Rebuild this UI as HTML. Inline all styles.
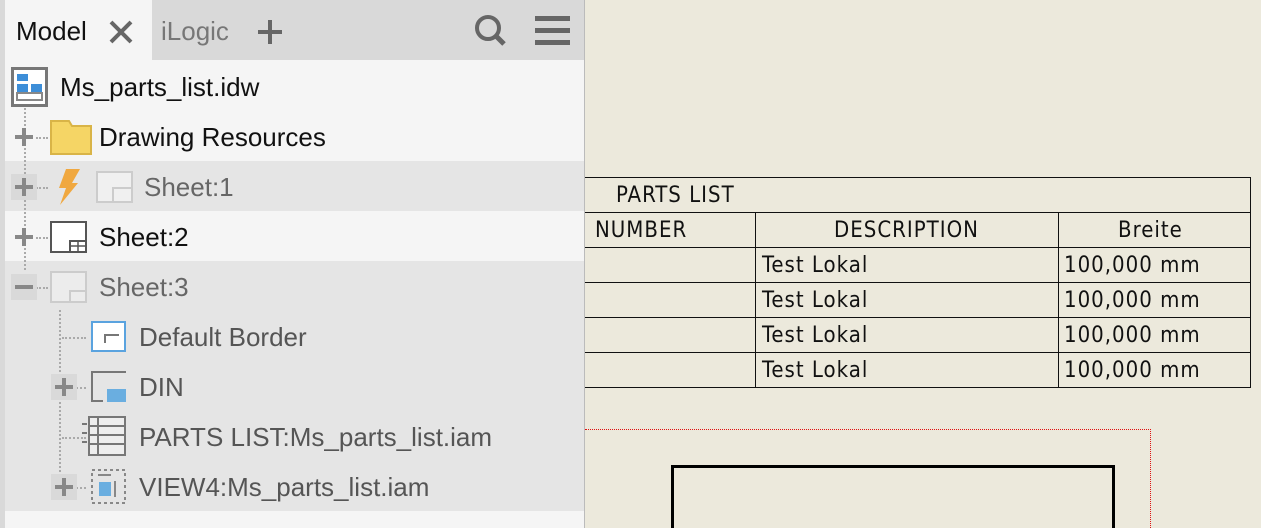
<!DOCTYPE html>
<html style="overflow:hidden;width:1261px;height:528px"><head><meta charset="utf-8"><style>
*{margin:0;padding:0;box-sizing:border-box}
body{width:1261px;height:528px;overflow:hidden;position:relative;background:#ece9dc;font-family:Tahoma,"Liberation Sans",sans-serif}
.a{position:absolute}
.t{position:absolute;font-size:26px;color:#111;white-space:nowrap;line-height:30px}
.g{color:#666}
.dv{position:absolute;border-left:2px dotted #aaa}
.dh{position:absolute;border-top:2px dotted #aaa}
.pl{position:absolute;width:26px;height:26px}
.pl:before{content:"";position:absolute;left:4px;top:11px;width:18px;height:4px;background:#888}
.pl.p:after{content:"";position:absolute;left:11px;top:4px;width:4px;height:18px;background:#888}
.pl.bg{background:#d9d9d9}
.tb{position:absolute;font-family:"DejaVu Sans Condensed","Liberation Sans",sans-serif;font-size:22px;color:#111;white-space:nowrap;line-height:35px;letter-spacing:1px}
</style></head><body>
<div class="a" style="left:0;top:0;width:584px;height:528px;background:#f5f5f5"></div>
<div class="a" style="left:0;top:0;width:584px;height:60px;background:#d9d9d9"></div>
<div class="a" style="left:5px;top:0;width:147px;height:60px;background:#f5f5f5"></div>
<div class="a" style="left:0;top:0;width:5px;height:528px;background:#d9d9d9"></div>
<div class="a" style="left:584px;top:0;width:1px;height:528px;background:#bbb"></div>
<div class="t" style="left:16px;top:16px;font-size:26px">Model</div>
<svg class="a" style="left:108px;top:19px" width="26" height="26"><path d="M3 3L23 23M23 3L3 23" stroke="#666" stroke-width="4"/></svg>
<div class="t g" style="left:161px;top:16px;font-size:26px;color:#777">iLogic</div>
<svg class="a" style="left:256px;top:18px" width="28" height="28"><path d="M14 2V26M2 14H26" stroke="#666" stroke-width="4"/></svg>
<svg class="a" style="left:472px;top:12px" width="40" height="40"><circle cx="16" cy="16" r="11" fill="none" stroke="#666" stroke-width="4"/><path d="M24 24L32 32" stroke="#666" stroke-width="5"/></svg>
<div class="a" style="left:535px;top:16px;width:35px;height:5px;background:#666"></div>
<div class="a" style="left:535px;top:28px;width:35px;height:5px;background:#666"></div>
<div class="a" style="left:535px;top:40px;width:35px;height:5px;background:#666"></div>
<div class="a" style="left:5px;top:161px;width:579px;height:50px;background:#e5e5e5"></div>
<div class="a" style="left:5px;top:261px;width:579px;height:250px;background:#e5e5e5"></div>
<div class="dv" style="left:24px;top:108px;height:162px"></div>
<div class="dv" style="left:59px;top:310px;height:170px"></div>
<div class="dh" style="left:36px;top:137px;width:12px"></div>
<div class="dh" style="left:36px;top:187px;width:12px"></div>
<div class="dh" style="left:36px;top:237px;width:12px"></div>
<div class="dh" style="left:36px;top:287px;width:12px"></div>
<div class="dh" style="left:62px;top:337px;width:24px"></div>
<div class="dh" style="left:76px;top:387px;width:10px"></div>
<div class="dh" style="left:62px;top:437px;width:24px"></div>
<div class="dh" style="left:76px;top:487px;width:10px"></div>
<svg class="a" style="left:11px;top:67px" width="38" height="40"><rect x="1.5" y="1.5" width="34" height="37" fill="#fff" stroke="#777" stroke-width="3"/><rect x="6" y="7" width="11" height="7" fill="#3d8ed8"/><rect x="6" y="17" width="11" height="8" fill="#3d8ed8"/><rect x="20" y="17" width="11" height="8" fill="#3d8ed8"/><rect x="6" y="26" width="25" height="7" fill="none" stroke="#888" stroke-width="2"/></svg>
<div class="t" style="left:60px;top:72px">Ms_parts_list.idw</div>
<div class="pl p" style="left:11px;top:124px"></div>
<svg class="a" style="left:50px;top:119px" width="42" height="36"><path d="M1 2H19L22 7H41V35H1Z" fill="#f5d565" stroke="#d9b447" stroke-width="2"/></svg>
<div class="t" style="left:99px;top:122px">Drawing Resources</div>
<div class="pl p bg" style="left:11px;top:174px"></div>
<svg class="a" style="left:54px;top:168px" width="30" height="38"><path d="M12 1H26L18 15H24L6 37L12 20H5Z" fill="#f0a840"/></svg>
<svg class="a" style="left:96px;top:171px" width="38" height="32"><rect x="1" y="1" width="35" height="30" fill="#f0f0f0" stroke="#ccc" stroke-width="2"/><rect x="17" y="17" width="19" height="14" fill="none" stroke="#ccc" stroke-width="2"/></svg>
<div class="t g" style="left:144px;top:172px">Sheet:1</div>
<div class="pl p" style="left:11px;top:224px"></div>
<svg class="a" style="left:50px;top:221px" width="38" height="32"><rect x="1" y="1" width="35" height="30" fill="#fff" stroke="#555" stroke-width="2"/><rect x="20" y="20" width="16" height="11" fill="none" stroke="#555" stroke-width="2"/><path d="M28 20V31M20 25H36" stroke="#555" stroke-width="1.5"/></svg>
<div class="t" style="left:99px;top:222px">Sheet:2</div>
<div class="pl bg" style="left:11px;top:274px"></div>
<svg class="a" style="left:50px;top:271px" width="38" height="32"><rect x="1" y="1" width="35" height="30" fill="#ececec" stroke="#ccc" stroke-width="2"/><rect x="20" y="20" width="16" height="11" fill="none" stroke="#ccc" stroke-width="2"/></svg>
<div class="t g" style="left:99px;top:272px">Sheet:3</div>
<svg class="a" style="left:91px;top:321px" width="36" height="32"><rect x="1" y="1" width="33" height="29" fill="#fff" stroke="#5aa3df" stroke-width="2"/><path d="M14 22V14H28" fill="none" stroke="#777" stroke-width="2"/></svg>
<div class="t g" style="left:139px;top:322px;color:#555">Default Border</div>
<div class="pl p bg" style="left:51px;top:374px"></div>
<svg class="a" style="left:91px;top:371px" width="36" height="32"><path d="M34 2V1H1V30H12" fill="none" stroke="#777" stroke-width="2"/><rect x="16" y="18" width="19" height="13" fill="#6aaee0"/></svg>
<div class="t g" style="left:139px;top:372px;color:#555">DIN</div>
<svg class="a" style="left:81px;top:416px" width="46" height="40"><rect x="8" y="1" width="36" height="38" fill="#eee" stroke="#777" stroke-width="2"/><path d="M8 10H44M8 19H44M8 28H44M17 1V39M1 8H6M1 17H6M1 26H6" stroke="#777" stroke-width="2"/></svg>
<div class="t g" style="left:139px;top:422px;color:#555">PARTS LIST:Ms_parts_list.iam</div>
<div class="pl p bg" style="left:51px;top:474px"></div>
<svg class="a" style="left:91px;top:469px" width="38" height="36"><rect x="1" y="1" width="33" height="33" fill="none" stroke="#888" stroke-width="2" stroke-dasharray="3 3"/><rect x="8" y="13" width="12" height="14" fill="#6aaee0"/><path d="M7 6H20M24 12V28" stroke="#888" stroke-width="2"/></svg>
<div class="t g" style="left:139px;top:472px;color:#555">VIEW4:Ms_parts_list.iam</div>
<div class="a" style="left:585px;top:177px;width:666px;height:211px;border:1px solid #111;border-left:none"></div>
<div class="a" style="left:585px;top:212px;width:666px;height:1px;background:#111"></div>
<div class="a" style="left:585px;top:247px;width:666px;height:1px;background:#111"></div>
<div class="a" style="left:585px;top:282px;width:666px;height:1px;background:#111"></div>
<div class="a" style="left:585px;top:317px;width:666px;height:1px;background:#111"></div>
<div class="a" style="left:585px;top:352px;width:666px;height:1px;background:#111"></div>
<div class="a" style="left:755px;top:212px;width:1px;height:176px;background:#111"></div>
<div class="a" style="left:1058px;top:212px;width:1px;height:176px;background:#111"></div>
<div class="tb" style="left:616px;top:178px">PARTS LIST</div>
<div class="tb" style="left:595px;top:213px">NUMBER</div>
<div class="tb" style="left:834px;top:213px">DESCRIPTION</div>
<div class="tb" style="left:1118px;top:213px">Breite</div>
<div class="tb" style="left:762px;top:248px">Test Lokal</div><div class="tb" style="left:1064px;top:248px">100,000 mm</div>
<div class="tb" style="left:762px;top:283px">Test Lokal</div><div class="tb" style="left:1064px;top:283px">100,000 mm</div>
<div class="tb" style="left:762px;top:318px">Test Lokal</div><div class="tb" style="left:1064px;top:318px">100,000 mm</div>
<div class="tb" style="left:762px;top:353px">Test Lokal</div><div class="tb" style="left:1064px;top:353px">100,000 mm</div>
<div class="a" style="left:585px;top:429px;width:566px;height:0;border-top:1px dotted #e01010"></div>
<div class="a" style="left:1150px;top:429px;width:0;height:99px;border-left:1px dotted #e01010"></div>
<div class="a" style="left:671px;top:465px;width:444px;height:63px;border:3px solid #000;border-bottom:none"></div>
</body></html>
